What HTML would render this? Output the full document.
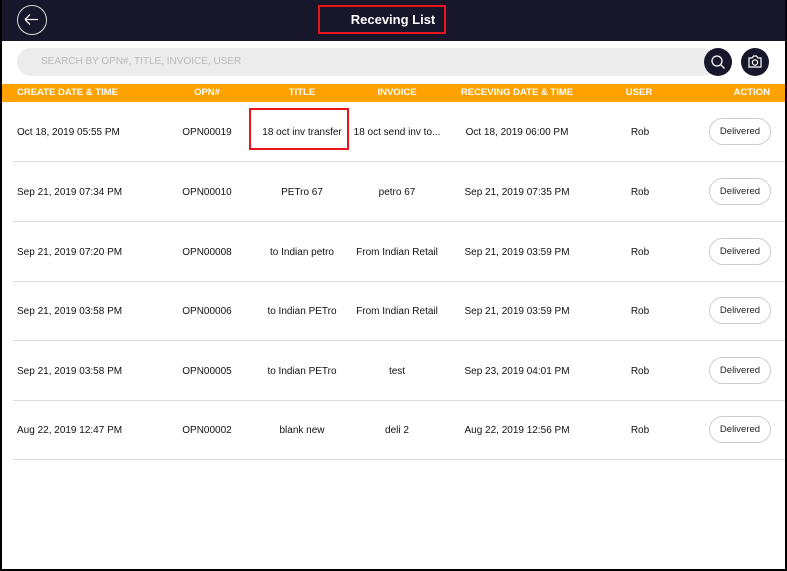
<!DOCTYPE html>
<html><head><style>
*{margin:0;padding:0;box-sizing:border-box}
body{width:787px;height:571px;background:#000;font-family:"Liberation Sans",sans-serif;overflow:hidden;position:relative}
.page{position:absolute;left:2px;top:0;width:783px;height:569px;background:#fff}
.hdr{position:absolute;left:0;top:0;width:783px;height:41px;background:#17162a}
.back{position:absolute;left:15px;top:5px;width:30px;height:30px;border:1.5px solid #ddd;border-radius:50%}
.title{position:absolute;left:316px;top:5px;width:128px;height:29px;border:2px solid #e8141c;color:#fff;font-weight:bold;font-size:13px;text-align:center;line-height:26px;padding-left:22px}
.search{position:absolute;left:15px;top:48px;width:700px;height:28px;background:#ececec;border-radius:14px;color:#bbb;font-size:10px;line-height:28px;padding-left:24px}
.circ{position:absolute;top:48px;width:28px;height:28px;border-radius:50%;background:#17162a}
.bar{position:absolute;left:0;top:84px;width:783px;height:18px;background:#ffa200;color:#fff;font-size:9.5px;font-weight:bold;line-height:18px}
.c{position:absolute;white-space:nowrap}
.row{position:absolute;left:11px;width:772px;height:60px;border-bottom:1px solid #dcdcdc;font-size:10px;color:#111}
.row .c{top:1px;line-height:60px}
.row .btn{position:absolute;left:696px;top:16px;width:62px;height:27px;border:1px solid #ccc;border-radius:14px;text-align:center;line-height:25px;font-size:9.5px;color:#222}
.ctr{transform:translateX(-50%)}
</style></head><body><div class="page">
<div class="hdr">
<div class="back"><svg width="27" height="27" viewBox="0 0 27 27"><path d="M7 13.5H20M7 13.5l5-5M7 13.5l5 5" stroke="#eee" stroke-width="1.3" fill="none"/></svg></div>
<div class="title">Receving List</div>
</div>
<div class="search">SEARCH BY OPN#, TITLE, INVOICE, USER</div>
<div class="circ" style="left:702px"><svg width="28" height="28" viewBox="0 0 28 28"><circle cx="13" cy="13" r="5" stroke="#fff" stroke-width="1.3" fill="none"/><path d="M16.5 16.5l4 4" stroke="#fff" stroke-width="1.3"/></svg></div>
<div class="circ" style="left:739px"><svg width="28" height="28" viewBox="0 0 28 28"><path d="M8 10h3l1.5-2h3l1.5 2h3v9h-12z" stroke="#fff" stroke-width="1.2" fill="none"/><circle cx="14" cy="14.5" r="2.6" stroke="#fff" stroke-width="1.2" fill="none"/></svg></div>
<div class="bar">
<span class="c" style="left:15px">CREATE DATE &amp; TIME</span>
<span class="c ctr" style="left:205px">OPN#</span>
<span class="c ctr" style="left:300px">TITLE</span>
<span class="c ctr" style="left:395px">INVOICE</span>
<span class="c ctr" style="left:515px">RECEVING DATE &amp; TIME</span>
<span class="c ctr" style="left:637px">USER</span>
<span class="c" style="right:15px">ACTION</span>
</div>
<div class="row" style="top:102px"><span class="c" style="left:4px">Oct 18, 2019 05:55 PM</span><span class="c ctr" style="left:194px">OPN00019</span><span class="c ctr" style="left:289px">18 oct inv transfer</span><span class="c ctr" style="left:384px">18 oct send inv to...</span><span class="c ctr" style="left:504px">Oct 18, 2019 06:00 PM</span><span class="c ctr" style="left:627px">Rob</span><span class="c btn">Delivered</span></div>
<div style="position:absolute;left:247px;top:108px;width:100px;height:42px;border:2px solid #e8141c"></div>
<div class="row" style="top:162px"><span class="c" style="left:4px">Sep 21, 2019 07:34 PM</span><span class="c ctr" style="left:194px">OPN00010</span><span class="c ctr" style="left:289px">PETro 67</span><span class="c ctr" style="left:384px">petro 67</span><span class="c ctr" style="left:504px">Sep 21, 2019 07:35 PM</span><span class="c ctr" style="left:627px">Rob</span><span class="c btn">Delivered</span></div>
<div class="row" style="top:222px"><span class="c" style="left:4px">Sep 21, 2019 07:20 PM</span><span class="c ctr" style="left:194px">OPN00008</span><span class="c ctr" style="left:289px">to Indian petro</span><span class="c ctr" style="left:384px">From Indian Retail</span><span class="c ctr" style="left:504px">Sep 21, 2019 03:59 PM</span><span class="c ctr" style="left:627px">Rob</span><span class="c btn">Delivered</span></div>
<div class="row" style="top:281px"><span class="c" style="left:4px">Sep 21, 2019 03:58 PM</span><span class="c ctr" style="left:194px">OPN00006</span><span class="c ctr" style="left:289px">to Indian PETro</span><span class="c ctr" style="left:384px">From Indian Retail</span><span class="c ctr" style="left:504px">Sep 21, 2019 03:59 PM</span><span class="c ctr" style="left:627px">Rob</span><span class="c btn">Delivered</span></div>
<div class="row" style="top:341px"><span class="c" style="left:4px">Sep 21, 2019 03:58 PM</span><span class="c ctr" style="left:194px">OPN00005</span><span class="c ctr" style="left:289px">to Indian PETro</span><span class="c ctr" style="left:384px">test</span><span class="c ctr" style="left:504px">Sep 23, 2019 04:01 PM</span><span class="c ctr" style="left:627px">Rob</span><span class="c btn">Delivered</span></div>
<div class="row" style="top:400px"><span class="c" style="left:4px">Aug 22, 2019 12:47 PM</span><span class="c ctr" style="left:194px">OPN00002</span><span class="c ctr" style="left:289px">blank new</span><span class="c ctr" style="left:384px">deli 2</span><span class="c ctr" style="left:504px">Aug 22, 2019 12:56 PM</span><span class="c ctr" style="left:627px">Rob</span><span class="c btn">Delivered</span></div>
</div></body></html>
